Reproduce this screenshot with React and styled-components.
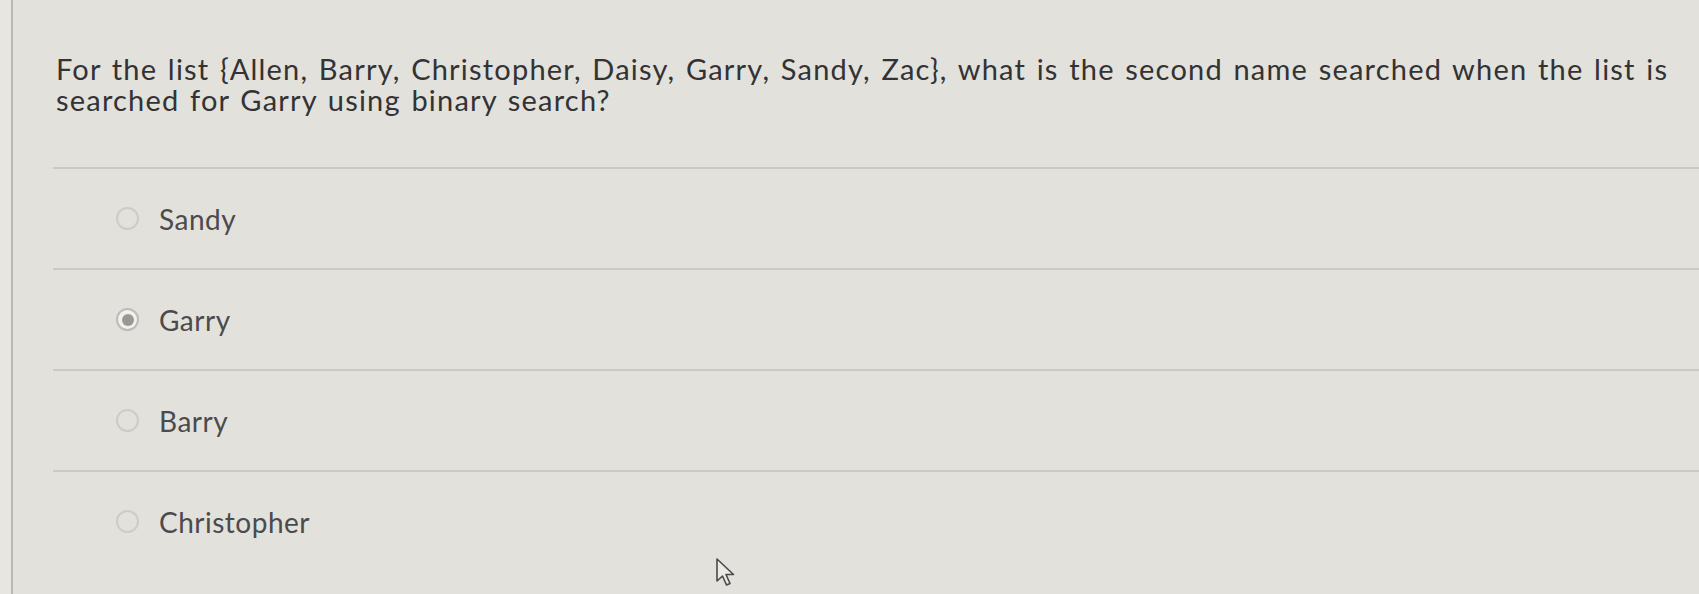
import React from "react";
import styled, { createGlobalStyle } from "styled-components";

const Global = createGlobalStyle`
  html, body { margin: 0; padding: 0; }
  body {
    background: #e2e1db;
    font-family: Lato, "Noto Sans", sans-serif;
    width: 1699px;
    height: 594px;
    overflow: hidden;
  }
`;

const Page = styled.div`
  position: relative;
  display: flex;
  height: 594px;
`;

const Gutter = styled.div`
  width: 11px;
  flex: none;
  background: #e7e6e1;
  border-right: 2px solid #b9b8b3;
`;

const Content = styled.div`
  flex: 1;
  padding: 53px 0 0 40px;
`;

const Question = styled.p`
  margin: 0 0 0 3px;
  max-width: 1625px;
  font-size: 29px;
  line-height: 31px;
  letter-spacing: 1.2px;
  word-spacing: 2px;
  color: #333234;
`;

const Options = styled.div`
  margin-top: 52px;
  display: flex;
  flex-direction: column;
`;

const Option = styled.label`
  display: flex;
  align-items: center;
  height: 99px;
  border-top: 2px solid #cac9c3;
  padding-left: 63px;
  gap: 20px;
  font-size: 28px;
  letter-spacing: 0.5px;
  color: #4b4a4d;
`;

const Radio = styled.span`
  width: 19px;
  height: 19px;
  flex: none;
  border-radius: 50%;
  border: 2px solid ${(p) => (p.$checked ? "#bdbcb9" : "#cdccc7")};
  background: ${(p) => (p.$checked ? "#f1f0ec" : "transparent")};
  display: flex;
  align-items: center;
  justify-content: center;
  &::after {
    content: "";
    width: 12px;
    height: 12px;
    border-radius: 50%;
    background: ${(p) => (p.$checked ? "#999896" : "transparent")};
  }
`;

const Cursor = styled.svg`
  position: absolute;
  left: 715px;
  top: 557px;
  width: 22px;
  height: 30px;
`;

const options = [
  { label: "Sandy", checked: false },
  { label: "Garry", checked: true },
  { label: "Barry", checked: false },
  { label: "Christopher", checked: false },
];

export default function App() {
  return (
    <>
      <Global />
      <Page>
        <Gutter />
        <Content>
          <Question>
            For the list {"{"}Allen, Barry, Christopher, Daisy, Garry, Sandy, Zac{"}"}, what is the second name searched when the list is searched for Garry using binary search?
          </Question>
          <Options>
            {options.map((o) => (
              <Option key={o.label}>
                <Radio $checked={o.checked} />
                {o.label}
              </Option>
            ))}
          </Options>
        </Content>
        <Cursor viewBox="0 0 22 30">
          <path
            d="M2 2 L2 24 L7.5 19 L11.5 28 L15 26.5 L11 17.5 L18.5 17.5 Z"
            fill="#eceae5"
            stroke="#4a4a4c"
            strokeWidth="1.6"
            strokeLinejoin="round"
          />
        </Cursor>
      </Page>
    </>
  );
}
